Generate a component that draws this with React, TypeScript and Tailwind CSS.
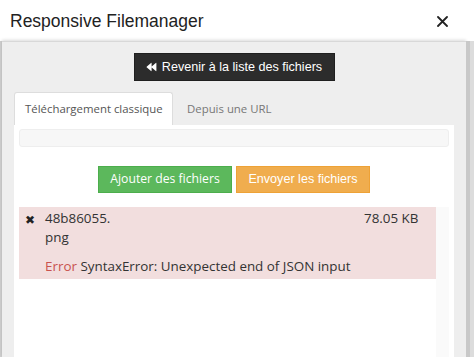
import React from "react";

export default function App() {
  const sans = { fontFamily: '"Liberation Sans", Arial, sans-serif' };
  return (
    <div className="w-[474px] h-[357px] overflow-hidden bg-white relative" style={sans}>
      <div className="h-[41px] flex items-center justify-between pl-[10px] pr-[26px]">
        <div className="text-[17.5px] text-[#222] leading-none pt-[2px]">Responsive Filemanager</div>
        <svg width="11" height="11" viewBox="0 0 11 11" className="mt-[2px]">
          <path d="M1 1 L10 10 M10 1 L1 10" stroke="#222" strokeWidth="1.8" strokeLinecap="round" />
        </svg>
      </div>
      <div className="flex h-[316px]">
        <div className="w-[2px] bg-[#cfcfcf]" />
        <div className="w-[464px] bg-[#eeeeee] border-t border-[#d8d8d8] shadow-[0_-1px_3px_rgba(0,0,0,0.15)] flex flex-col">
          <div className="flex justify-center pt-[11px]">
            <div className="w-[201px] h-[28px] bg-[#2c2c2c] border border-[#1f1f1f] flex items-center justify-center gap-[5px] text-white text-[12.6px]">
              <svg width="11" height="10" viewBox="0 0 11 10">
                <path
                  d="M0.6 5 Q0.3 5 0.9 4.4 L5 1 Q5.6 0.6 5.6 1.4 L5.6 8.6 Q5.6 9.4 5 9 L0.9 5.6 Q0.3 5 0.6 5 Z M5.4 5 Q5.1 5 5.7 4.4 L9.8 1 Q10.4 0.6 10.4 1.4 L10.4 8.6 Q10.4 9.4 9.8 9 L5.7 5.6 Q5.1 5 5.4 5 Z"
                  fill="white"
                />
              </svg>
              <span>Revenir à la liste des fichiers</span>
            </div>
          </div>
          <div className="ml-[12px] mt-[11px] flex items-end" style={{ fontFamily: '"Open Sans", sans-serif' }}>
            <div className="h-[33px] w-[159px] bg-white border border-b-0 border-[#dddddd] rounded-t-[3px] flex items-center pl-[10px] text-[11.4px] text-[#555]">
              Téléchargement classique
            </div>
            <div className="h-[33px] flex items-center pl-[14px] text-[11.4px] text-[#777]">Depuis une URL</div>
          </div>
          <div className="ml-[12px] w-[440px] flex-1 bg-white pt-[4px] px-[5px] flex flex-col" style={{ fontFamily: '"Open Sans", sans-serif' }}>
            <div className="h-[18px] bg-[#f7f7f7] border border-[#eeeeee] rounded-[3px]" />
            <div className="flex justify-center gap-[4px] mt-[19px]">
              <div className="w-[134px] h-[27px] bg-[#5cb85c] border border-[#4cae4c] flex items-center justify-center text-white text-[12.2px]">
                Ajouter des fichiers
              </div>
              <div className="w-[134px] h-[27px] bg-[#f0ad4e] border border-[#eea236] flex items-center justify-center text-white text-[12.6px]" style={sans}>
                Envoyer les fichiers
              </div>
            </div>
            <div className="flex mt-[14px] flex-1">
              <div className="w-[417px]">
                <div className="bg-[#f2dede] h-[72px] pl-[6px] pt-[2px] flex text-[13.4px] text-[#333] leading-[19px]">
                  <div className="w-[20px] pt-[2px] text-[12px] text-[#222]" style={{ fontFamily: '"DejaVu Sans", sans-serif' }}>✖</div>
                  <div className="flex-1">
                    <div className="flex">
                      <div className="flex-1">
                        <div>48b86055.</div>
                        <div>png</div>
                      </div>
                      <div className="w-[72px]">78.05 KB</div>
                    </div>
                    <div className="mt-[10px]">
                      <span className="text-[#c9524e]">Error</span> SyntaxError: Unexpected end of JSON input
                    </div>
                  </div>
                </div>
              </div>
              <div className="w-[13px] bg-[#fafafa]" />
            </div>
          </div>
        </div>
        <div className="w-[4px] bg-[#c8c8c8]" />
        <div className="w-[4px] bg-[#dcdcdc]" />
      </div>
    </div>
  );
}
